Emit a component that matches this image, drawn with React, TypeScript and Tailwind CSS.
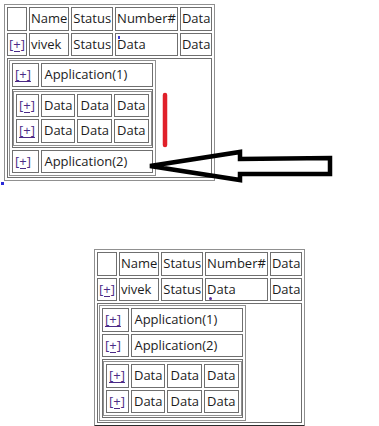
import React from "react";

const cell = "border border-[#6f6f6f] px-[1px] py-[1px] leading-[19.5px] text-left align-middle whitespace-nowrap";
const subCell = "border border-[#6f6f6f] px-[2px] py-[1px] leading-[19.5px] text-left align-middle whitespace-nowrap";
const table = "border-separate border-spacing-[2px] border border-[#909090]";

const Plus = () => (
  <a href="#" className="text-[#4b2a86] underline underline-offset-2">
    [+]
  </a>
);

const DataTable = () => (
  <table className={table}>
    <tbody>
      {[0, 1].map((r) => (
        <tr key={r}>
          <td className={`${subCell} pr-[3px]`}>
            <Plus />
          </td>
          <td className={subCell}>Data</td>
          <td className={subCell}>Data</td>
          <td className={subCell}>Data</td>
        </tr>
      ))}
    </tbody>
  </table>
);

const AppRow = ({ n }: { n: number }) => (
  <tr>
    <td className={subCell}>
      <Plus />
    </td>
    <td className={subCell}>Application({n})</td>
  </tr>
);

const DataRow = () => (
  <tr>
    <td colSpan={2} className="border border-[#6f6f6f] px-0 py-[1px]">
      <DataTable />
    </td>
  </tr>
);

const MainTable = ({ dataFirst, className }: { dataFirst: boolean; className: string }) => (
  <table className={`${table} ${className}`}>
    <tbody>
      <tr>
        <td className={cell}>&nbsp;</td>
        <td className={cell}>Name</td>
        <td className={cell}>Status</td>
        <td className={cell}>Number#</td>
        <td className={cell}>Data</td>
      </tr>
      <tr>
        <td className={cell}>
          <Plus />
        </td>
        <td className={cell}>vivek</td>
        <td className={cell}>Status</td>
        <td className={`${cell} relative`}>
          Data
          {dataFirst ? (
            <span className="absolute left-[2px] top-[2px] w-[2px] h-[3px] bg-[#3b3bd0]" />
          ) : (
            <span className="absolute left-[3px] top-[18px] w-[3px] h-[3px] rounded-full bg-[#5a2aa0]" />
          )}
        </td>
        <td className={cell}>Data</td>
      </tr>
      <tr>
        <td colSpan={5} className="border border-[#6f6f6f] p-[1px] align-top">
          <table className={table}>
            <tbody>
              <AppRow n={1} />
              {dataFirst ? (
                <>
                  <DataRow />
                  <AppRow n={2} />
                </>
              ) : (
                <>
                  <AppRow n={2} />
                  <DataRow />
                </>
              )}
            </tbody>
          </table>
        </td>
      </tr>
    </tbody>
  </table>
);

export default function App() {
  return (
    <div className="relative w-[379px] h-[426px] overflow-hidden bg-white text-[13px] text-[#1c1c1c] font-['Open_Sans',sans-serif]">
      <MainTable dataFirst className="ml-[4px] mt-[4px]" />
      <MainTable dataFirst={false} className="ml-[94px] mt-[68px] border-b-2 border-b-[#2a2a2a]" />

      <span className="absolute left-[1px] top-[182px] w-[3px] h-[3px] bg-[#2b2bd8]" />

      <svg className="absolute left-0 top-0 pointer-events-none" width="379" height="426" viewBox="0 0 379 426">
        <line x1="165" y1="95" x2="165" y2="145" stroke="#e0202a" strokeWidth="4.5" strokeLinecap="round" />
        <polygon
          points="150,166 240,152 240,159 330,158 330,174 240,174 240,180"
          fill="none"
          stroke="#000"
          strokeWidth="4.5"
          strokeLinejoin="miter"
        />
      </svg>
    </div>
  );
}
